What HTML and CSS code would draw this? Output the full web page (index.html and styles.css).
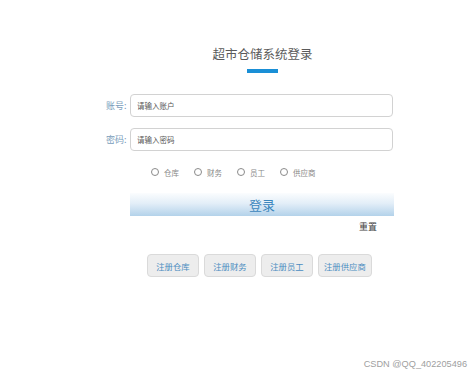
FILE: index.html
```html
<!DOCTYPE html>
<html lang="zh-CN">
<head>
    <meta charset="UTF-8">
    <meta name="viewport" content="width=device-width, initial-scale=1.0">
    <title>超市仓储系统登录</title>
    <link rel="stylesheet" href="styles.css">
</head>
<body>
    <div class="login-box">
        <h2 class="title">超市仓储系统登录</h2>
        <div class="title-bar"></div>

        <form class="login-form">
            <div class="form-row">
                <label for="account">账号:</label>
                <input type="text" id="account" placeholder="请输入账户">
            </div>
            <div class="form-row">
                <label for="password">密码:</label>
                <input type="password" id="password" placeholder="请输入密码">
            </div>

            <div class="role-row">
                <label class="role"><span class="radio"></span>仓库</label>
                <label class="role"><span class="radio"></span>财务</label>
                <label class="role"><span class="radio"></span>员工</label>
                <label class="role"><span class="radio"></span>供应商</label>
            </div>

            <button type="button" class="login-btn">登录</button>
            <div class="reset-row"><a class="reset">重置</a></div>
        </form>

        <div class="register-row">
            <button type="button" class="reg-btn">注册仓库</button>
            <button type="button" class="reg-btn">注册财务</button>
            <button type="button" class="reg-btn">注册员工</button>
            <button type="button" class="reg-btn">注册供应商</button>
        </div>
    </div>

    <div class="watermark">CSDN @QQ_402205496</div>
</body>
</html>
```

FILE: styles.css
```css
body {
    margin: 0;
    background-color: #fff;
    font-family: "Noto Sans CJK SC", "Liberation Sans", sans-serif;
    width: 474px;
    height: 377px;
    position: relative;
    overflow: hidden;
}
.login-box {
    width: 264px;
    margin-left: 130px;
    padding-top: 43px;
}
.title {
    margin: 0;
    text-align: center;
    font-size: 12.5px;
    font-weight: normal;
    color: #5a5a5a;
    line-height: 22px;
    padding-left: 1px;
}
.title-bar {
    width: 31px;
    height: 4px;
    background-color: #1a8fd6;
    margin: 4px auto 0;
}
.login-form {
    margin-top: 21px;
}
.form-row {
    display: flex;
    align-items: center;
    position: relative;
    margin-bottom: 11px;
}
.form-row label {
    position: absolute;
    left: -24px;
    font-size: 9px;
    color: #7a9dbb;
}
.form-row input {
    width: 263px;
    height: 23px;
    box-sizing: border-box;
    border: 1px solid #d2d2d2;
    border-radius: 4px;
    padding: 0 6px;
    font-size: 7.5px;
    font-family: inherit;
    color: #333;
}
.form-row input::placeholder {
    color: #555;
}
.role-row {
    display: flex;
    gap: 15px;
    margin-top: 10px;
    padding-left: 21px;
    height: 20px;
    align-items: center;
}
.role {
    display: flex;
    align-items: center;
    font-size: 7.5px;
    color: #888;
}
.radio {
    width: 6px;
    height: 6px;
    border: 1px solid #8a8a8a;
    border-radius: 50%;
    margin-right: 5px;
}
.login-btn {
    display: block;
    width: 264px;
    height: 23px;
    margin-top: 11px;
    border: none;
    padding: 0;
    background: linear-gradient(to bottom, #fbfdfe 0%, #e3eef8 45%, #b3d2ea 100%);
    color: #3b86bd;
    font-size: 13px;
    font-family: inherit;
    line-height: 23px;
}
.reset-row {
    display: flex;
    justify-content: flex-end;
    padding-right: 17px;
    margin-top: 4px;
}
.reset {
    font-size: 9px;
    color: #444;
}
.register-row {
    display: flex;
    gap: 5px;
    margin-top: 21px;
    padding-left: 17px;
}
.reg-btn {
    min-width: 52px;
    height: 23px;
    padding: 0 5px;
    border: 1px solid #dadada;
    border-radius: 4px;
    background-color: #ededed;
    color: #4a8cc0;
    font-size: 8.4px;
    font-family: inherit;
}
.watermark {
    position: absolute;
    right: 7px;
    bottom: 8px;
    font-size: 9.2px;
    color: #a0a0a0;
    font-family: "Liberation Sans", sans-serif;
}
```
